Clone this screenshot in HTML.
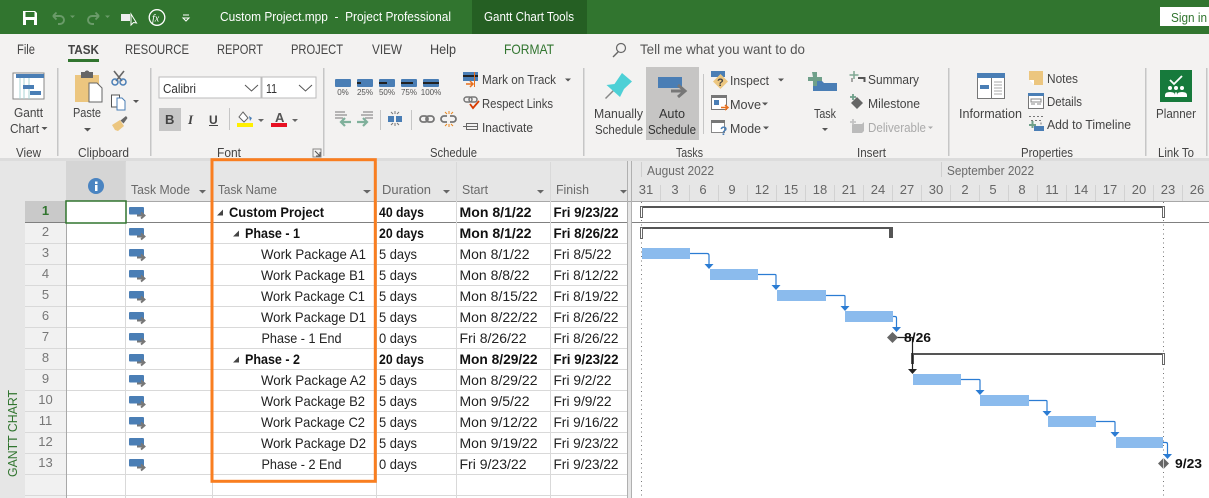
<!DOCTYPE html>
<html><head><meta charset="utf-8"><title>Custom Project</title>
<style>
html,body{margin:0;padding:0;background:#fff;overflow:hidden}
svg{display:block}
text{font-family:"Liberation Sans",sans-serif;font-size:14px;fill:#222;white-space:pre}
.b{font-weight:bold;fill:#111}
.h{fill:#6a6a6a;font-size:13px}
.r{fill:#444;font-size:13px}
.g{fill:#444;font-size:13px}
.t{fill:#444;font-size:14px}
.n{fill:#777;font-size:13px;text-anchor:middle}
.s{fill:#666;font-size:13px;text-anchor:middle}
.w{fill:#fff;font-size:13px}
.p{fill:#555;font-size:8px;text-anchor:middle}
</style></head><body>
<svg width="1209" height="498" viewBox="0 0 1209 498" xmlns="http://www.w3.org/2000/svg">
<defs>
<g id="m"><rect x="0" y="0" width="15" height="7.500" rx="1" fill="#4a7eb5"/><path d="M8 8.500h7M12 5.500l3.500 3-3.500 3" fill="none" stroke="#777" stroke-width="1.900"/></g>
<path id="a" d="M-4.500 0h9L0 5z" fill="#2b7cd3"/>
</defs>
<rect width="1209" height="498" fill="#fff"/>
<!-- title -->
<rect width="1209" height="34" fill="#31752f"/>
<rect x="472" width="115" height="34" fill="#255f23"/>
<path d="M23 11h12l2 2v12H23z" fill="#fff"/><rect x="25.500" y="12" width="9" height="5" fill="#31752f"/><rect x="26" y="20" width="8" height="5" fill="#31752f"/>
<path d="M53 16h7a4 4 0 0 1 0 8h-2M53 16l3.500-3.500M53 16l3.500 3.500" fill="none" stroke="#6a9b69" stroke-width="1.900"/>
<path d="M70 15.500h5l-2.500 2.500z" fill="#6a9b69"/>
<path d="M99 16h-7a4 4 0 0 0 0 8h2M99 16l-3.500-3.500M99 16l-3.500 3.500" fill="none" stroke="#6a9b69" stroke-width="1.900"/>
<path d="M105 15.500h5l-2.500 2.500z" fill="#6a9b69"/>
<rect x="121" y="14" width="9" height="7" fill="#eee"/><path d="M131 14v11l2.500-2.500 3 .5z" fill="#31752f" stroke="#fff"/>
<circle cx="157" cy="17.500" r="7.800" fill="none" stroke="#fff" stroke-width="1.300"/>
<text x="152" y="21.500" style="fill:#fff;font-size:10px;font-family:'Liberation Serif',serif;font-style:italic">fx</text>
<path d="M183 15h6M183 18h6l-3 3z" fill="none" stroke="#fff"/>
<text class="w" x="220" y="21" textLength="231" lengthAdjust="spacingAndGlyphs">Custom Project.mpp  -  Project Professional</text>
<text class="w" x="484" y="21" textLength="90" lengthAdjust="spacingAndGlyphs">Gantt Chart Tools</text>
<rect x="1160" y="7" width="49" height="19" fill="#fff"/>
<text x="1171" y="22" style="fill:#31752f;font-size:13px" textLength="36" lengthAdjust="spacingAndGlyphs">Sign in</text>
<!-- ribbon -->
<rect y="34" width="1209" height="126" fill="#f3f2f1"/>
<rect y="158" width="1209" height="3" fill="#dcdcdc"/>
<g class="tabs">
<text class="t" x="17" y="54" textLength="18" lengthAdjust="spacingAndGlyphs">File</text>
<text class="t" x="68" y="54" textLength="31" lengthAdjust="spacingAndGlyphs" style="font-weight:bold;font-size:13px">TASK</text>
<rect x="68" y="59" width="31" height="3" fill="#31752f"/>
<text class="t" x="125" y="54" textLength="64" lengthAdjust="spacingAndGlyphs">RESOURCE</text>
<text class="t" x="217" y="54" textLength="46" lengthAdjust="spacingAndGlyphs">REPORT</text>
<text class="t" x="291" y="54" textLength="52" lengthAdjust="spacingAndGlyphs">PROJECT</text>
<text class="t" x="372" y="54" textLength="30" lengthAdjust="spacingAndGlyphs">VIEW</text>
<text class="t" x="430" y="54" textLength="26" lengthAdjust="spacingAndGlyphs">Help</text>
<text x="504" y="54" style="fill:#31752f" textLength="50" lengthAdjust="spacingAndGlyphs">FORMAT</text>
<circle cx="621" cy="48" r="4.500" fill="none" stroke="#666" stroke-width="1.200"/><path d="M618 52l-5 5" stroke="#666" stroke-width="1.400"/>
<text class="t" x="640" y="54" textLength="165" lengthAdjust="spacingAndGlyphs" style="fill:#555">Tell me what you want to do</text>
</g>
<!-- separators -->
<g fill="#c6c6c6"><rect x="57" y="68" width="1.500" height="88"/><rect x="150" y="68" width="1.500" height="88"/><rect x="323" y="68" width="1.500" height="88"/><rect x="583" y="68" width="1.500" height="88"/><rect x="948" y="68" width="1.500" height="88"/><rect x="1145" y="68" width="1.500" height="88"/><rect x="1206" y="68" width="1.500" height="88"/><rect x="703" y="74" width="1" height="60"/><rect x="229" y="108" width="1" height="22"/><rect x="380" y="110" width="1" height="20"/><rect x="411" y="110" width="1" height="20"/></g>
<!-- group labels -->
<text class="g" x="16" y="157" textLength="25" lengthAdjust="spacingAndGlyphs">View</text>
<text class="g" x="78" y="157" textLength="51" lengthAdjust="spacingAndGlyphs">Clipboard</text>
<text class="g" x="217" y="157" textLength="24" lengthAdjust="spacingAndGlyphs">Font</text>
<text class="g" x="430" y="157" textLength="47" lengthAdjust="spacingAndGlyphs">Schedule</text>
<text class="g" x="676" y="157" textLength="27" lengthAdjust="spacingAndGlyphs">Tasks</text>
<text class="g" x="857" y="157" textLength="29" lengthAdjust="spacingAndGlyphs">Insert</text>
<text class="g" x="1021" y="157" textLength="52" lengthAdjust="spacingAndGlyphs">Properties</text>
<text class="g" x="1158" y="157" textLength="36" lengthAdjust="spacingAndGlyphs">Link To</text>
<path d="M313 149h8v8h-8z" fill="none" stroke="#888"/><path d="M315 151l5 5M320 152v4h-4" fill="none" stroke="#555"/>
<!-- view -->
<rect x="13" y="73" width="31" height="26" fill="#fff" stroke="#888"/><rect x="16" y="74" width="28" height="4" fill="#4a7eb5"/>
<path d="M20 78v21M24 78v21M29 78v21" stroke="#a8d4d4"/>
<rect x="23" y="85" width="11" height="4" fill="#4a7eb5"/><rect x="30" y="91" width="11" height="4" fill="#4a7eb5"/>
<text class="r" x="14" y="117" textLength="29" lengthAdjust="spacingAndGlyphs">Gantt</text>
<text class="r" x="10" y="133" textLength="29" lengthAdjust="spacingAndGlyphs">Chart</text>
<path d="M41.500 127h6l-3 3z" fill="#555"/>
<!-- clipboard -->
<path d="M75 75h24v27H75z" fill="#ecc67f"/><rect x="81" y="72" width="12" height="6" fill="#666"/><circle cx="87" cy="73" r="2.500" fill="#666"/>
<path d="M89 83h8l5 5v14H89z" fill="#fff" stroke="#666"/>
<text class="r" x="73" y="117" textLength="28" lengthAdjust="spacingAndGlyphs">Paste</text>
<path d="M84 128h7l-3.500 3.500z" fill="#555"/>
<path d="M114 71l8 10M124 71l-8 10" stroke="#666" stroke-width="1.600"/><circle cx="115" cy="82" r="3" fill="none" stroke="#4a7eb5" stroke-width="1.500"/><circle cx="123" cy="82" r="3" fill="none" stroke="#4a7eb5" stroke-width="1.500"/>
<path d="M111.500 95h8v12h-8z" fill="#fff" stroke="#555"/><path d="M117 98h5l3 3v9h-8z" fill="#fff" stroke="#4a7eb5"/>
<path d="M133 100h6l-3 3z" fill="#555"/>
<path d="M112 125l8-5 4 6-6 5-3-1z" fill="#ecc67f"/><path d="M120.500 120.500l5.500-4.500 1.500 2-4 5.500z" fill="#666"/>
<!-- font -->
<rect x="159" y="77" width="102" height="21" fill="#fff" stroke="#bbb"/><rect x="262" y="77" width="54" height="21" fill="#fff" stroke="#bbb"/>
<text class="r" x="163" y="93" textLength="33" lengthAdjust="spacingAndGlyphs" style="fill:#333">Calibri</text>
<text class="r" x="266" y="93" textLength="11" lengthAdjust="spacingAndGlyphs" style="fill:#333">11</text>
<path d="M245 85l6.500 6 6.500-6M299 85l6.500 6 6.500-6" fill="none" stroke="#555"/>
<rect x="159" y="108" width="22" height="23" fill="#c6c6c6"/>
<text x="165" y="124" style="font-weight:bold;fill:#444;font-size:13px">B</text>
<text x="188" y="124" style="font-weight:bold;font-style:italic;fill:#444;font-size:13px;font-family:'Liberation Serif',serif">I</text>
<text x="209" y="124" style="font-weight:bold;fill:#444;font-size:12px">U</text><rect x="209" y="125" width="9" height="1" fill="#444"/>
<path d="M243 112l5 6-4 4-5-5z" fill="#fff" stroke="#666"/><path d="M249 116l3 2-2 3z" fill="#4a7eb5"/>
<rect x="237" y="123" width="16" height="4" fill="#ffef00"/>
<path d="M258 119h6l-3 3z" fill="#666"/>
<text x="275" y="122" style="font-weight:bold;fill:#555;font-size:13px">A</text><rect x="271" y="123" width="16" height="4" fill="#e81123"/>
<path d="M292 119h6l-3 3z" fill="#666"/>
<!-- schedule -->
<g fill="#4a7eb5"><rect x="335" y="79" width="16" height="8" rx="1"/><rect x="357" y="79" width="16" height="8" rx="1"/><rect x="379" y="79" width="16" height="8" rx="1"/><rect x="401" y="79" width="16" height="8" rx="1"/><rect x="423" y="79" width="16" height="8" rx="1"/></g>
<g fill="#222"><rect x="357" y="82" width="4" height="2"/><rect x="379" y="82" width="8" height="2"/><rect x="401" y="82" width="12" height="2"/><rect x="423" y="82" width="16" height="2"/></g>
<text class="p" x="343" y="95">0%</text><text class="p" x="365" y="95">25%</text><text class="p" x="387" y="95">50%</text><text class="p" x="409" y="95">75%</text><text class="p" x="431" y="95">100%</text>
<path d="M335 112h10M335 115h12M335 118h8M363 112h10M361 115h12M365 118h8" stroke="#777"/>
<path d="M351 122h-10M345 118l-4 4 4 4" fill="none" stroke="#7fb09b" stroke-width="2.200"/>
<path d="M357 122h10M363 118l4 4-4 4" fill="none" stroke="#7fb09b" stroke-width="2.200"/>
<rect x="388" y="116" width="6" height="6" fill="#4a7eb5"/><rect x="396" y="116" width="6" height="6" fill="#4a7eb5"/>
<path d="M391 112l2 2M399 112l-2 2M391 125l2-2M399 125l-2-2M395 111v3M395 123v3" stroke="#777"/>
<rect x="420" y="116" width="8" height="6" rx="3" fill="none" stroke="#777" stroke-width="1.800"/><rect x="426" y="116" width="8" height="6" rx="3" fill="none" stroke="#777" stroke-width="1.800"/>
<path d="M447 116h-3a3 3 0 0 0 0 6h3M450 116h3a3 3 0 0 1 0 6h-3" fill="none" stroke="#777" stroke-width="1.800"/>
<path d="M445 112l2 2M453 112l-2 2M445 126l2-2M453 126l-2-2M449 111v3M449 124v3" stroke="#e8871e"/>
<rect x="463" y="72" width="15" height="9" fill="#4a7eb5"/><rect x="463" y="75" width="15" height="2" fill="#222"/>
<path d="M466 84h6M470 81l3 3-3 3" fill="none" stroke="#e8701e" stroke-width="1.500"/><path d="M474.500 72v15" stroke="#e8701e"/>
<text class="r" x="482" y="84" textLength="74" lengthAdjust="spacingAndGlyphs">Mark on Track</text>
<path d="M565 78.500h6l-3 3z" fill="#555"/>
<rect x="464" y="97" width="8" height="5" rx="2.500" fill="none" stroke="#777" stroke-width="1.500"/><rect x="469" y="97" width="8" height="5" rx="2.500" fill="none" stroke="#777" stroke-width="1.500"/>
<path d="M470 104l3 4 6-7" fill="none" stroke="#d83b01" stroke-width="1.800"/>
<text class="r" x="482" y="108" textLength="71" lengthAdjust="spacingAndGlyphs">Respect Links</text>
<rect x="466.500" y="123.500" width="11" height="6" fill="none" stroke="#666"/><path d="M463 126.500h15" stroke="#666"/>
<text class="r" x="482" y="132" textLength="51" lengthAdjust="spacingAndGlyphs">Inactivate</text>
<!-- tasks -->
<path d="M605.500 98.500l10-10" stroke="#888" stroke-width="1.500"/>
<path d="M606.500 85l8-1 7.500-11 10 8.500-8 7.500-4 8z" fill="#4dd0d6"/>
<rect x="646" y="67" width="53" height="73" fill="#c6c5c4"/>
<rect x="658" y="77" width="24" height="11" fill="#4a7eb5"/>
<path d="M671 91h13M678 85l7 6-7 6" fill="none" stroke="#777" stroke-width="3"/>
<text class="r" x="594" y="118" textLength="49" lengthAdjust="spacingAndGlyphs">Manually</text>
<text class="r" x="595" y="134" textLength="48" lengthAdjust="spacingAndGlyphs">Schedule</text>
<text class="r" x="659" y="118" textLength="26" lengthAdjust="spacingAndGlyphs" style="fill:#333">Auto</text>
<text class="r" x="648" y="134" textLength="48" lengthAdjust="spacingAndGlyphs" style="fill:#333">Schedule</text>
<rect x="711" y="71" width="14" height="6" fill="#4a7eb5"/>
<path d="M720.500 74l7.500 7.500-7.500 7.500-7.500-7.500z" fill="#ecc67f"/>
<text x="717" y="86" style="font-weight:bold;font-size:11px;fill:#444">?</text>
<text class="r" x="730" y="85" textLength="39" lengthAdjust="spacingAndGlyphs">Inspect</text>
<path d="M778 78.500h6l-3 3z" fill="#555"/>
<rect x="711.500" y="96.500" width="15" height="13" fill="#fff" stroke="#777"/><rect x="711" y="95" width="16" height="3" fill="#777"/><rect x="714" y="100" width="5" height="5" fill="#4a7eb5"/>
<path d="M721 107.500h6M725 105l3 2.500-3 2.500" fill="none" stroke="#e8701e" stroke-width="1.500"/>
<text class="r" x="730" y="109" textLength="31" lengthAdjust="spacingAndGlyphs">Move</text>
<path d="M762 102.500h6l-3 3z" fill="#555"/>
<rect x="711.500" y="121.500" width="13" height="11" fill="#fff" stroke="#888"/><rect x="711" y="120" width="14" height="3" fill="#777"/>
<text x="720" y="135" style="font-weight:bold;font-size:12px;fill:#4a7eb5">?</text>
<text class="r" x="730" y="133" textLength="31" lengthAdjust="spacingAndGlyphs">Mode</text>
<path d="M763 126.500h6l-3 3z" fill="#555"/>
<!-- insert -->
<path d="M813 80h24v11h-24z" fill="#4a7eb5"/><path d="M813 80h8l3 3h13v-3z" fill="#f3f2f1"/>
<path d="M812 72h5v5h5v4h-5v5h-4v-5h-5v-4h5z" fill="#6fa08a"/>
<text class="r" x="814" y="118" textLength="22" lengthAdjust="spacingAndGlyphs">Task</text>
<path d="M822 128h6l-3 3z" fill="#555"/>
<path d="M853 75h3M849.500 75h9M854 71v8" stroke="#7fa892" stroke-width="1.500"/><path d="M858 78h6.500v4" fill="none" stroke="#555" stroke-width="2"/><path d="M852 78v4" stroke="#555"/>
<text class="r" x="868" y="84" textLength="51" lengthAdjust="spacingAndGlyphs">Summary</text>
<path d="M857 97l6 6-6 6-6-6z" fill="#666"/><path d="M850 97h6M853 94v6" stroke="#6fa08a" stroke-width="1.800"/>
<text class="r" x="868" y="108" textLength="52" lengthAdjust="spacingAndGlyphs">Milestone</text>
<path d="M852 124h10l2-2v9l-2 2h-10z" fill="#bbb"/><path d="M850 122h6M853 119v6" stroke="#c4c4c4" stroke-width="1.800"/>
<text class="r" x="868" y="132" textLength="58" lengthAdjust="spacingAndGlyphs" style="fill:#aaa">Deliverable</text>
<path d="M928 126.500h5l-2.500 2.500z" fill="#aaa"/>
<!-- properties -->
<rect x="977.500" y="73.500" width="27" height="25" fill="#fff" stroke="#777"/><rect x="977" y="73" width="28" height="5" fill="#4a7eb5"/>
<rect x="980" y="85" width="9" height="4" fill="#4a7eb5"/><path d="M991.500 78v21" stroke="#777"/><path d="M994 82h8M994 85h8M994 88h8M994 91h8M994 94h8" stroke="#aaa"/>
<text class="r" x="959" y="118" textLength="63" lengthAdjust="spacingAndGlyphs">Information</text>
<path d="M1029 71h14v14h-9l-5-5z" fill="#ecc67f"/><path d="M1029 80h5v5z" fill="#fff"/>
<text class="r" x="1047" y="83" textLength="31" lengthAdjust="spacingAndGlyphs">Notes</text>
<rect x="1028.500" y="93.500" width="15" height="15" fill="#fff" stroke="#777"/><rect x="1028" y="93" width="16" height="3" fill="#4a7eb5"/><path d="M1031 99h10v3h-10zM1031 104h4M1037 104h4" fill="none" stroke="#888"/>
<text class="r" x="1047" y="106" textLength="35" lengthAdjust="spacingAndGlyphs">Details</text>
<path d="M1029 116.500h14M1031 120.500h10v4" fill="none" stroke="#777" stroke-dasharray="2 2"/>
<rect x="1034" y="126" width="10" height="5" fill="#4a7eb5"/><path d="M1029 125h7M1032.500 121v7" stroke="#6fa08a" stroke-width="2"/>
<text class="r" x="1047" y="129" textLength="84" lengthAdjust="spacingAndGlyphs">Add to Timeline</text>
<!-- planner -->
<rect x="1160" y="70" width="32" height="32" fill="#177a3c"/>
<path d="M1170 80l4 4 8-8" fill="none" stroke="#fff" stroke-width="1.800"/>
<circle cx="1170" cy="88" r="2" fill="#fff"/><circle cx="1176" cy="88" r="2" fill="#fff"/><circle cx="1182" cy="88" r="2" fill="#fff"/>
<path d="M1165 97v-2q0-3 5-3t5 3q0-3 1-3t1 3q0-3 5-3t5 3v2z" fill="#fff"/>
<text class="r" x="1156" y="118" textLength="40" lengthAdjust="spacingAndGlyphs">Planner</text>
<!-- sheet bg -->
<rect y="161" width="66" height="337" fill="#e6e6e6"/>
<rect x="25" y="222" width="41" height="276" fill="#f1f1f1"/>
<rect x="25" y="201" width="41" height="21" fill="#c9c9c9"/>
<rect x="66" y="161" width="565" height="40" fill="#e6e6e6"/>
<rect x="66" y="161" width="60" height="40" fill="#d5d5d5"/>
<rect x="631" y="161" width="578" height="40" fill="#e6e6e6"/>
<rect x="627" y="161" width="4" height="337" fill="#e6e6e6"/>
<g stroke="#d9d9d9"><path d="M25 243.500H627M25 264.500H627M25 285.500H627M25 306.500H627M25 327.500H627M25 348.500H627M25 369.500H627M25 390.500H627M25 411.500H627M25 432.500H627M25 453.500H627M25 474.500H627M25 495.500H627"/></g>
<path d="M25 222.500H627M631 222.500H1209" stroke="#808080"/>
<path d="M66 201.500H1209" stroke="#a8a8a8"/>
<g stroke="#d9d9d9"><path d="M125.500 162V498M212.500 162V498M376.500 162V498M456.500 162V498M550.500 162V498"/></g>
<path d="M66.500 201V498" stroke="#a8a8a8"/>
<path d="M627.500 161V498M631.500 161V498" stroke="#b0b0b0"/>
<!-- left label -->
<text transform="translate(17,477) rotate(-90)" style="fill:#31752f;font-size:13px" textLength="87" lengthAdjust="spacingAndGlyphs">GANTT CHART</text>
<!-- headers -->
<circle cx="96" cy="186" r="8" fill="#4a84c1"/><rect x="95" y="185" width="2.500" height="6" fill="#fff"/><rect x="95" y="181.500" width="2.500" height="2.500" fill="#fff"/>
<text class="h" x="131" y="194" textLength="59" lengthAdjust="spacingAndGlyphs">Task Mode</text>
<text class="h" x="218" y="194" textLength="59" lengthAdjust="spacingAndGlyphs">Task Name</text>
<text class="h" x="382" y="194" textLength="49" lengthAdjust="spacingAndGlyphs">Duration</text>
<text class="h" x="462" y="194" textLength="26" lengthAdjust="spacingAndGlyphs">Start</text>
<text class="h" x="556" y="194" textLength="33" lengthAdjust="spacingAndGlyphs">Finish</text>
<g fill="#666"><path d="M199 190h7l-3.500 3.500zM363 190h8l-4 3.500zM443 190h7l-3.500 3.500zM537 190h7l-3.500 3.500zM620 190h7l-3.500 3.500z"/></g>
<!-- row numbers -->
<text class="n" x="45.500" y="215" style="fill:#31752f;font-weight:bold">1</text>
<text class="n" x="45.500" y="236">2</text><text class="n" x="45.500" y="257">3</text><text class="n" x="45.500" y="278">4</text><text class="n" x="45.500" y="299">5</text><text class="n" x="45.500" y="320">6</text><text class="n" x="45.500" y="341">7</text><text class="n" x="45.500" y="362">8</text><text class="n" x="45.500" y="383">9</text><text class="n" x="45.500" y="404">10</text><text class="n" x="45.500" y="425">11</text><text class="n" x="45.500" y="446">12</text><text class="n" x="45.500" y="467">13</text>
<rect x="66" y="201" width="60" height="22" fill="#fff" stroke="#31752f" stroke-width="1.500"/>
<!-- mode icons -->
<use href="#m" x="129" y="207"/><use href="#m" x="129" y="228"/><use href="#m" x="129" y="249"/><use href="#m" x="129" y="270"/><use href="#m" x="129" y="291"/><use href="#m" x="129" y="312"/><use href="#m" x="129" y="333"/><use href="#m" x="129" y="354"/><use href="#m" x="129" y="375"/><use href="#m" x="129" y="396"/><use href="#m" x="129" y="417"/><use href="#m" x="129" y="438"/><use href="#m" x="129" y="459"/>
<!-- names -->
<path d="M217 215.500h6v-6zM233 236.500h6v-6zM233 362.500h6v-6z" fill="#444"/>
<text class="b" x="229" y="217" textLength="95" lengthAdjust="spacingAndGlyphs">Custom Project</text>
<text class="b" x="245" y="238" textLength="55" lengthAdjust="spacingAndGlyphs">Phase - 1</text>
<text x="261" y="259" textLength="105" lengthAdjust="spacingAndGlyphs">Work Package A1</text>
<text x="261" y="280" textLength="104" lengthAdjust="spacingAndGlyphs">Work Package B1</text>
<text x="261" y="301" textLength="104" lengthAdjust="spacingAndGlyphs">Work Package C1</text>
<text x="261" y="322" textLength="105" lengthAdjust="spacingAndGlyphs">Work Package D1</text>
<text x="261.500" y="343" textLength="80" lengthAdjust="spacingAndGlyphs">Phase - 1 End</text>
<text class="b" x="245" y="364" textLength="55" lengthAdjust="spacingAndGlyphs">Phase - 2</text>
<text x="261" y="385" textLength="105" lengthAdjust="spacingAndGlyphs">Work Package A2</text>
<text x="261" y="406" textLength="104" lengthAdjust="spacingAndGlyphs">Work Package B2</text>
<text x="261" y="427" textLength="104" lengthAdjust="spacingAndGlyphs">Work Package C2</text>
<text x="261" y="448" textLength="105" lengthAdjust="spacingAndGlyphs">Work Package D2</text>
<text x="261.500" y="469" textLength="80" lengthAdjust="spacingAndGlyphs">Phase - 2 End</text>
<!-- durations -->
<text class="b" x="379" y="217" textLength="45" lengthAdjust="spacingAndGlyphs">40 days</text>
<text class="b" x="379" y="238" textLength="45" lengthAdjust="spacingAndGlyphs">20 days</text>
<text x="379" y="259" textLength="38" lengthAdjust="spacingAndGlyphs">5 days</text>
<text x="379" y="280" textLength="38" lengthAdjust="spacingAndGlyphs">5 days</text>
<text x="379" y="301" textLength="38" lengthAdjust="spacingAndGlyphs">5 days</text>
<text x="379" y="322" textLength="38" lengthAdjust="spacingAndGlyphs">5 days</text>
<text x="379" y="343" textLength="38" lengthAdjust="spacingAndGlyphs">0 days</text>
<text class="b" x="379" y="364" textLength="45" lengthAdjust="spacingAndGlyphs">20 days</text>
<text x="379" y="385" textLength="38" lengthAdjust="spacingAndGlyphs">5 days</text>
<text x="379" y="406" textLength="38" lengthAdjust="spacingAndGlyphs">5 days</text>
<text x="379" y="427" textLength="38" lengthAdjust="spacingAndGlyphs">5 days</text>
<text x="379" y="448" textLength="38" lengthAdjust="spacingAndGlyphs">5 days</text>
<text x="379" y="469" textLength="38" lengthAdjust="spacingAndGlyphs">0 days</text>
<!-- start -->
<text class="b" x="459.500" y="217" textLength="72" lengthAdjust="spacingAndGlyphs">Mon 8/1/22</text>
<text class="b" x="459.500" y="238" textLength="72" lengthAdjust="spacingAndGlyphs">Mon 8/1/22</text>
<text x="459.500" y="259" textLength="70" lengthAdjust="spacingAndGlyphs">Mon 8/1/22</text>
<text x="459.500" y="280" textLength="70" lengthAdjust="spacingAndGlyphs">Mon 8/8/22</text>
<text x="459.500" y="301" textLength="78" lengthAdjust="spacingAndGlyphs">Mon 8/15/22</text>
<text x="459.500" y="322" textLength="78" lengthAdjust="spacingAndGlyphs">Mon 8/22/22</text>
<text x="459.500" y="343" textLength="67" lengthAdjust="spacingAndGlyphs">Fri 8/26/22</text>
<text class="b" x="459.500" y="364" textLength="78" lengthAdjust="spacingAndGlyphs">Mon 8/29/22</text>
<text x="459.500" y="385" textLength="78" lengthAdjust="spacingAndGlyphs">Mon 8/29/22</text>
<text x="459.500" y="406" textLength="70" lengthAdjust="spacingAndGlyphs">Mon 9/5/22</text>
<text x="459.500" y="427" textLength="78" lengthAdjust="spacingAndGlyphs">Mon 9/12/22</text>
<text x="459.500" y="448" textLength="78" lengthAdjust="spacingAndGlyphs">Mon 9/19/22</text>
<text x="459.500" y="469" textLength="67" lengthAdjust="spacingAndGlyphs">Fri 9/23/22</text>
<!-- finish -->
<text class="b" x="553.500" y="217" textLength="65" lengthAdjust="spacingAndGlyphs">Fri 9/23/22</text>
<text class="b" x="553.500" y="238" textLength="65" lengthAdjust="spacingAndGlyphs">Fri 8/26/22</text>
<text x="553.500" y="259" textLength="58" lengthAdjust="spacingAndGlyphs">Fri 8/5/22</text>
<text x="553.500" y="280" textLength="65" lengthAdjust="spacingAndGlyphs">Fri 8/12/22</text>
<text x="553.500" y="301" textLength="65" lengthAdjust="spacingAndGlyphs">Fri 8/19/22</text>
<text x="553.500" y="322" textLength="65" lengthAdjust="spacingAndGlyphs">Fri 8/26/22</text>
<text x="553.500" y="343" textLength="65" lengthAdjust="spacingAndGlyphs">Fri 8/26/22</text>
<text class="b" x="553.500" y="364" textLength="65" lengthAdjust="spacingAndGlyphs">Fri 9/23/22</text>
<text x="553.500" y="385" textLength="58" lengthAdjust="spacingAndGlyphs">Fri 9/2/22</text>
<text x="553.500" y="406" textLength="58" lengthAdjust="spacingAndGlyphs">Fri 9/9/22</text>
<text x="553.500" y="427" textLength="65" lengthAdjust="spacingAndGlyphs">Fri 9/16/22</text>
<text x="553.500" y="448" textLength="65" lengthAdjust="spacingAndGlyphs">Fri 9/23/22</text>
<text x="553.500" y="469" textLength="65" lengthAdjust="spacingAndGlyphs">Fri 9/23/22</text>
<!-- timescale -->
<path d="M641.500 162v15M941.500 162v15" stroke="#cfcfcf"/>
<text class="h" x="647" y="175" textLength="67" lengthAdjust="spacingAndGlyphs">August 2022</text>
<text class="h" x="947" y="175" textLength="87" lengthAdjust="spacingAndGlyphs">September 2022</text>
<path d="M660.500 185v16M689.500 185v16M718.500 185v16M747.500 185v16M776.500 185v16M805.500 185v16M834.500 185v16M863.500 185v16M892.500 185v16M921.500 185v16M950.500 185v16M979.500 185v16M1008.500 185v16M1037.500 185v16M1066.500 185v16M1095.500 185v16M1124.500 185v16M1153.500 185v16M1182.500 185v16" stroke="#d2d2d2"/>
<text class="s" x="646" y="194">31</text><text class="s" x="675" y="194">3</text><text class="s" x="703" y="194">6</text><text class="s" x="732" y="194">9</text><text class="s" x="762" y="194">12</text><text class="s" x="791" y="194">15</text><text class="s" x="820" y="194">18</text><text class="s" x="849" y="194">21</text><text class="s" x="878" y="194">24</text><text class="s" x="907" y="194">27</text><text class="s" x="936" y="194">30</text><text class="s" x="965" y="194">2</text><text class="s" x="993" y="194">5</text><text class="s" x="1022" y="194">8</text><text class="s" x="1052" y="194">11</text><text class="s" x="1081" y="194">14</text><text class="s" x="1110" y="194">17</text><text class="s" x="1139" y="194">20</text><text class="s" x="1168" y="194">23</text><text class="s" x="1197" y="194">26</text>
<!-- gantt -->
<path d="M641.500 202V498M1163.500 202V498" stroke="#777" stroke-dasharray="1 3.500"/>
<g fill="#8bbbed"><rect x="642" y="248" width="48" height="11"/><rect x="710" y="269" width="48" height="11"/><rect x="777" y="290" width="49" height="11"/><rect x="845" y="311" width="48" height="11"/><rect x="913" y="374" width="48" height="11"/><rect x="980" y="395" width="49" height="11"/><rect x="1048" y="416" width="48" height="11"/><rect x="1116" y="437" width="47" height="11"/></g>
<!-- summaries -->
<g fill="#555"><rect x="641" y="206" width="523" height="2"/><rect x="641" y="227" width="252" height="2"/><rect x="889" y="227" width="4" height="11"/><rect x="913" y="353" width="251" height="2"/><rect x="911" y="353" width="3" height="11"/></g>
<g fill="#fff" stroke="#666"><rect x="640.500" y="206.500" width="2" height="11"/><rect x="1162.500" y="206.500" width="2" height="11"/><rect x="640.500" y="227.500" width="2" height="11"/><rect x="1162.500" y="353.500" width="2" height="11"/></g>
<!-- links -->
<g fill="none" stroke="#2b7cd3" stroke-width="1.200">
<path d="M690 253.500h17q2 0 2 2V264M758 274.500h17q1 0 1 1V285M826 295.500h18q1 0 1 1V306M893 316.500h2q1.500 0 1.500 1.500V327M961 379.500h18q1 0 1 1V390M1029 400.500h17q1 0 1 1V411M1096 421.500h18q1 0 1 1V432M1163 442.500h3q1.500 0 1.500 1.500V454"/>
</g>
<use href="#a" x="709" y="264"/><use href="#a" x="776" y="285"/><use href="#a" x="845" y="306"/><use href="#a" x="896.500" y="327"/><use href="#a" x="980" y="390"/><use href="#a" x="1047" y="411"/><use href="#a" x="1115" y="432"/><use href="#a" x="1167.500" y="454"/>
<path d="M893 337.500h19.500V370" fill="none" stroke="#222" stroke-width="1.200"/>
<path d="M908 369h9l-4.500 5z" fill="#222"/>
<path d="M892.500 332l5.500 5.500-5.500 5.500-5.500-5.500z" fill="#666"/>
<path d="M1163.500 458l5.500 5.500-5.500 5.500-5.500-5.500z" fill="#666"/><path d="M1163.500 458v11" stroke="#ccc"/>
<text x="904" y="342" style="font-weight:bold;font-size:13px;fill:#111" textLength="27" lengthAdjust="spacingAndGlyphs">8/26</text>
<text x="1175" y="468" style="font-weight:bold;font-size:13px;fill:#111" textLength="27" lengthAdjust="spacingAndGlyphs">9/23</text>
<!-- orange box -->
<rect x="212" y="159.700" width="163.300" height="321.600" fill="none" stroke="#f97e20" stroke-width="3"/>
</svg>
</body></html>
